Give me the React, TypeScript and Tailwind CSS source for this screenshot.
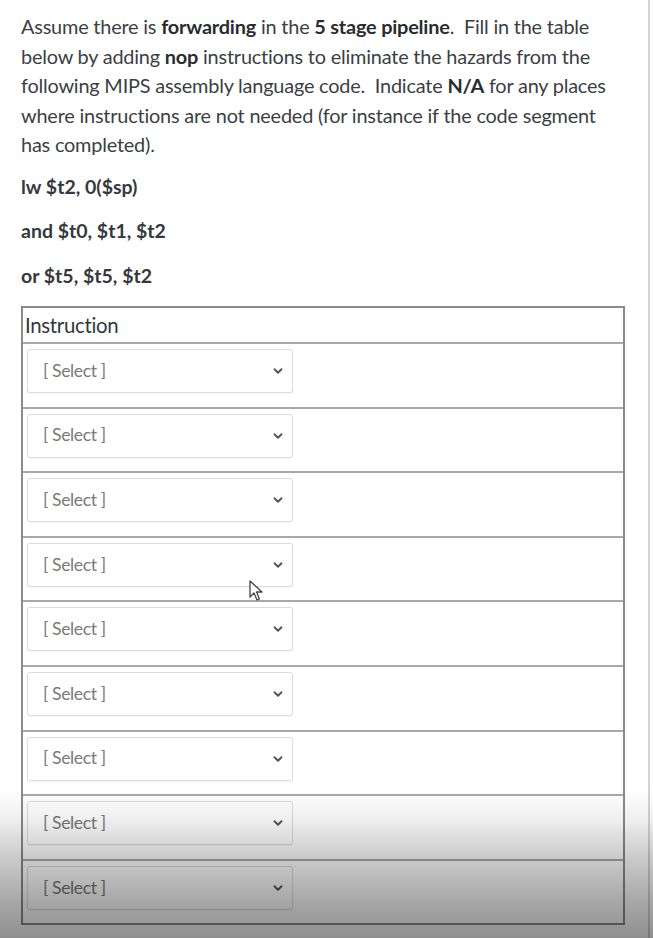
import { ChevronDown } from "lucide-react";

const ROWS = 9;

function SelectBox() {
  return (
    <div className="ml-[4px] mt-[5px] flex h-[44px] w-[266px] items-center justify-between rounded-[3px] border border-[#dcdcdc] bg-white pl-[15px] pr-[7px] shadow-[0_1px_1px_rgba(0,0,0,0.04)]">
      <span className="text-[17.6px] tracking-[-0.4px] text-[#7a7a7a]">[ Select ]</span>
      <ChevronDown size={14} strokeWidth={3.2} className="text-[#555]" />
    </div>
  );
}

export default function App() {
  return (
    <div className="relative h-[938px] w-[653px] overflow-hidden bg-white font-['Lato','Noto_Sans',sans-serif] text-[#3b3f44]">
      <div className="h-full w-[650px] border-r-2 border-[#d4d4d4] pl-[21px] pt-[12px]">
        <p className="w-[600px] text-[19.9px] tracking-[-0.2px] leading-[29.5px]">
          Assume there is <b className="font-bold text-[#2a2d30]">forwarding</b> in the{" "}
          <b className="font-bold text-[#2a2d30]">5 stage pipeline</b>.&nbsp; Fill in the table below by
          adding <b className="font-bold text-[#2a2d30]">nop</b> instructions to eliminate the hazards from
          the following MIPS assembly language code.&nbsp; Indicate{" "}
          <b className="font-bold text-[#2a2d30]">N/A</b> for any places where instructions are not needed
          (for instance if the code segment has completed).
        </p>
        <p className="mt-[12px] text-[19.5px] font-bold leading-[29.5px] text-[#35393d]">lw $t2, 0($sp)</p>
        <p className="mt-[15px] text-[19.5px] font-bold leading-[29.5px] text-[#35393d]">and $t0, $t1, $t2</p>
        <p className="mt-[15px] text-[19.5px] font-bold leading-[29.5px] text-[#35393d]">or $t5, $t5, $t2</p>

        <div className="mt-[16px] w-[604px] border-2 border-[#8a8a8a]">
          <div className="flex h-[34px] items-center pl-[2px] text-[20.4px] tracking-[-0.3px] text-[#33373b]">
            Instruction
          </div>
          {Array.from({ length: ROWS }).map((_, i) => (
            <div key={i} className="h-[64.6px] border-t-2 border-[#a8a8a8]">
              <SelectBox />
            </div>
          ))}
        </div>
      </div>

      {/* mouse pointer */}
      <svg
        className="pointer-events-none absolute left-[249px] top-[580px]"
        width="16"
        height="22"
        viewBox="0 0 16 22"
      >
        <path
          d="M1 1 L1 17 L5 13 L8 20 L10.5 19 L7.5 12 L13 12 Z"
          fill="#fff"
          stroke="#444"
          strokeWidth="1.3"
          strokeLinejoin="round"
        />
      </svg>

      {/* video shadow at bottom */}
      <div className="pointer-events-none absolute inset-x-0 bottom-0 h-[150px] bg-[linear-gradient(to_bottom,rgba(0,0,0,0)_0%,rgba(0,0,0,0.06)_20%,rgba(0,0,0,0.2)_45%,rgba(0,0,0,0.34)_75%,rgba(0,0,0,0.44)_100%)]" />
    </div>
  );
}
